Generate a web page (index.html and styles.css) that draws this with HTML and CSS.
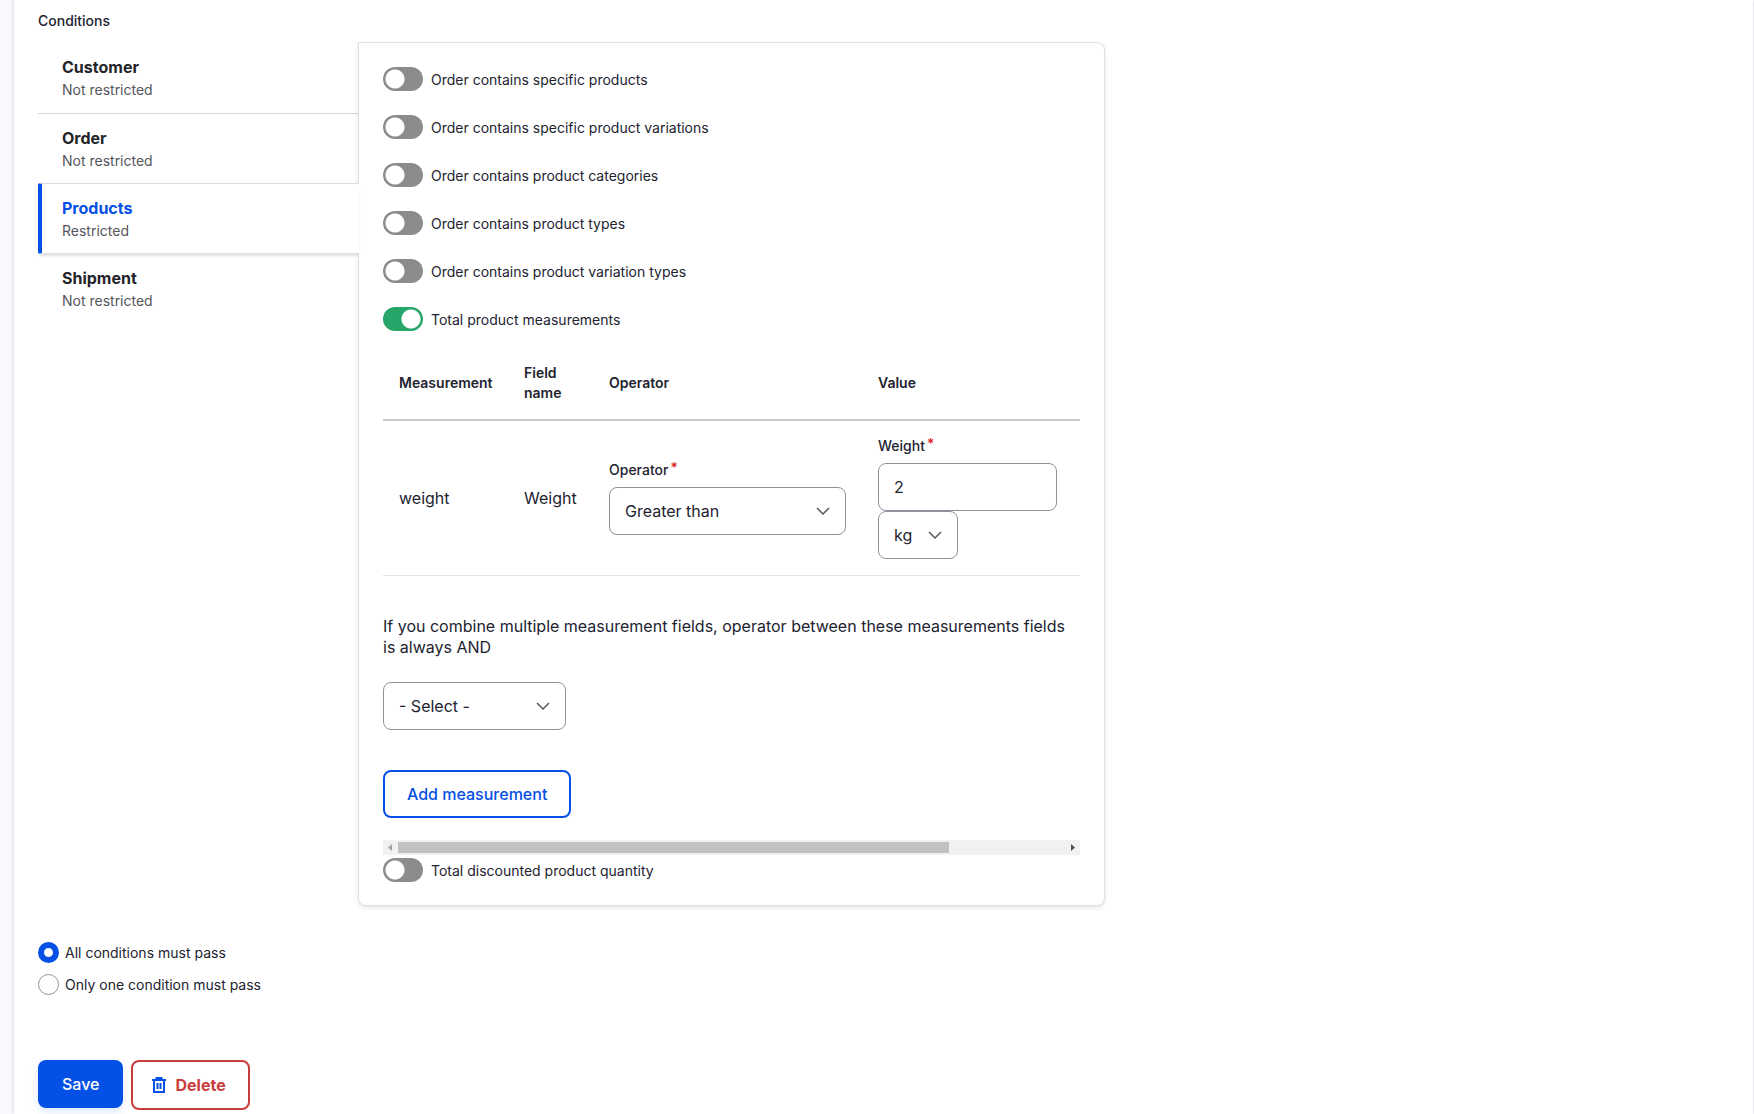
FILE: index.html
```html
<!DOCTYPE html>
<html lang="en">
<head>
<meta charset="utf-8">
<meta name="viewport" content="width=device-width, initial-scale=1">
<title>Edit promotion</title>
<link rel="stylesheet" href="styles.css">
</head>
<body>
<form class="page">
  <h4 class="section-title">Conditions</h4>

  <div class="vertical-tabs">
    <ul class="tabs">
      <li class="tab"><a class="tab-link" href="#customer"><strong class="tab-title">Customer</strong><span class="tab-summary">Not restricted</span></a></li>
      <li class="tab"><a class="tab-link" href="#order"><strong class="tab-title">Order</strong><span class="tab-summary">Not restricted</span></a></li>
      <li class="tab tab-active"><a class="tab-link" href="#products"><strong class="tab-title">Products</strong><span class="tab-summary">Restricted</span></a></li>
      <li class="tab"><a class="tab-link" href="#shipment"><strong class="tab-title">Shipment</strong><span class="tab-summary">Not restricted</span></a></li>
    </ul>

    <section class="panel" id="products">
      <div class="switches">
        <label class="switch-row"><input class="switch" type="checkbox"><span class="option-text">Order contains specific products</span></label>
        <label class="switch-row"><input class="switch" type="checkbox"><span class="option-text">Order contains specific product variations</span></label>
        <label class="switch-row"><input class="switch" type="checkbox"><span class="option-text">Order contains product categories</span></label>
        <label class="switch-row"><input class="switch" type="checkbox"><span class="option-text">Order contains product types</span></label>
        <label class="switch-row"><input class="switch" type="checkbox"><span class="option-text">Order contains product variation types</span></label>
        <label class="switch-row"><input class="switch" type="checkbox" checked><span class="option-text">Total product measurements</span></label>
      </div>

      <div class="measurements">
        <table class="measure-table">
          <thead>
            <tr>
              <th class="col-measurement" scope="col">Measurement</th>
              <th class="col-field" scope="col">Field name</th>
              <th class="col-operator" scope="col">Operator</th>
              <th scope="col">Value</th>
            </tr>
          </thead>
          <tbody>
            <tr>
              <td>weight</td>
              <td>Weight</td>
              <td>
                <label class="field-label required" for="operator">Operator</label>
                <span class="select-wrap select-fill">
                  <select class="control select" id="operator"><option>Greater than</option></select>
                  <svg class="chevron" viewBox="0 0 14 9" aria-hidden="true"><path d="M1 1l6 6 6-6"/></svg>
                </span>
              </td>
              <td>
                <label class="field-label required" for="weight">Weight</label>
                <input class="control number" id="weight" type="text" value="2">
                <span class="select-wrap select-unit">
                  <select class="control select" aria-label="Unit"><option>kg</option></select>
                  <svg class="chevron" viewBox="0 0 14 9" aria-hidden="true"><path d="M1 1l6 6 6-6"/></svg>
                </span>
              </td>
            </tr>
          </tbody>
        </table>
        <p class="hint">If you combine multiple measurement fields, operator between these measurements fields is always AND</p>
        <span class="select-wrap select-add">
          <select class="control select" aria-label="Measurement field"><option>- Select -</option></select>
          <svg class="chevron" viewBox="0 0 14 9" aria-hidden="true"><path d="M1 1l6 6 6-6"/></svg>
        </span>
        <div class="add-row"><button class="button button-outline" type="button">Add measurement</button></div>
      </div>
      <div class="scrollbar" aria-hidden="true">
        <svg class="scroll-arrow" viewBox="0 0 15 15"><path fill="#a3a3a3" d="M9 4v7L5 7.500z"/></svg>
        <div class="scroll-track"><div class="scroll-thumb"></div></div>
        <svg class="scroll-arrow" viewBox="0 0 15 15"><path fill="#505050" d="M6 4v7l4-3.500z"/></svg>
      </div>

      <label class="switch-row switch-last"><input class="switch" type="checkbox"><span class="option-text">Total discounted product quantity</span></label>
    </section>
  </div>

  <div class="radios">
    <label class="radio-row"><input class="radio" type="radio" name="pass" checked><span class="option-text">All conditions must pass</span></label>
    <label class="radio-row"><input class="radio" type="radio" name="pass"><span class="option-text">Only one condition must pass</span></label>
  </div>

  <div class="actions">
    <button class="button button-primary" type="submit">Save</button>
    <a class="button button-danger" href="#delete">
      <svg class="trash" viewBox="0 0 14 16" aria-hidden="true"><path d="M0 3h14M4.500 3V1h5v2M2 3v12h10V3M5.500 6v6M8.500 6v6"/></svg>
      <span>Delete</span>
    </a>
  </div>
</form>
</body>
</html>
```

FILE: styles.css
```css
* {
  box-sizing: border-box;
}

body {
  margin: 0;
  padding: 0 1px 0 14px;
  background: #f8faff;
  color: #222330;
  font: 16px/21px Inter, "Liberation Sans", sans-serif;
}

.page {
  min-height: 100vh;
  padding: 12px 24px 4px;
  background: #fff;
  box-shadow: 0 0 4px rgba(0, 0, 0, 0.2);
}

.section-title {
  margin: 0 0 12px;
  font-size: 14px;
  line-height: 18px;
  font-weight: 500;
}

/* Vertical tabs */
.vertical-tabs {
  display: grid;
  grid-template-columns: 320px minmax(0, 747px);
  align-items: start;
}

.tabs {
  position: relative;
  z-index: 1;
  margin: 0;
  padding: 0;
  list-style: none;
}

.tab-link {
  display: flex;
  flex-direction: column;
  gap: 1px;
  height: 70px;
  padding: 13px 20px 0 24px;
  color: #232429;
  text-decoration: none;
}

.tab:first-child .tab-link {
  height: 72px;
  padding-top: 14px;
  border-bottom: 1px solid #d3d4d9;
}

.tab-title {
  line-height: 22px;
}

.tab-summary {
  font-size: 14px;
  line-height: 22px;
  color: #55565b;
}

.tab-active {
  margin: -1px -1px 0 0;
  border: 1px solid #dcdde2;
  border-width: 1px 0;
  border-left: 4px solid #0550e6;
  border-radius: 2px 0 0 2px;
  background: #fff;
  box-shadow: 0 3px 3px -1px rgba(0, 0, 0, 0.12);
}

.tab-active .tab-link {
  height: 69px;
  padding-left: 20px;
}

.tab-active .tab-title {
  color: #0550e6;
}

.panel {
  padding: 24px 24px 23px;
  border: 1px solid #dedfe8;
  border-radius: 0 8px 8px 8px;
  background: #fff;
  box-shadow: 0 2px 4px rgba(0, 0, 0, 0.1);
}

/* Switches */
.switches {
  display: flex;
  flex-direction: column;
  gap: 24px;
}

.switch-row {
  display: flex;
  align-items: center;
  gap: 8px;
}

.option-text {
  padding-top: 2px;
  font-size: 14px;
  line-height: 22px;
}

.switch {
  flex: none;
  width: 40px;
  height: 24px;
  margin: 0;
  border-radius: 12px;
  appearance: none;
  background: radial-gradient(circle at 12px 12px, #fff 9px, #8c8c8c 10px);
}

.switch:checked {
  background: radial-gradient(circle at 28px 12px, #fff 9px, #26a769 10px);
}

.switch-last {
  margin-top: 3px;
}

/* Measurements */
.measurements {
  margin-top: 16px;
  overflow-x: auto;
  scrollbar-width: none;
}

.scrollbar {
  display: flex;
  height: 15px;
  background: #f1f1f1;
}

.scroll-arrow {
  flex: none;
  width: 15px;
  height: 15px;
}

.scroll-track {
  flex: 1;
  padding: 2px 0;
}

.scroll-thumb {
  width: 82.6%;
  height: 11px;
  background: #c1c1c1;
}

.measure-table {
  width: 100%;
  border-collapse: collapse;
  table-layout: fixed;
}

.col-measurement {
  width: 125px;
}

.col-field {
  width: 85px;
}

.col-operator {
  width: 269px;
}

.measure-table th {
  height: 73px;
  padding: 0 16px;
  border-bottom: 2px solid #c9c9cb;
  font-size: 14px;
  line-height: 20px;
  font-weight: 600;
  text-align: left;
}

.measure-table td {
  padding: 16px;
  border-bottom: 1px solid #e2e2e5;
  vertical-align: middle;
}

.field-label {
  display: block;
  margin-bottom: 8px;
  font-size: 14px;
  line-height: 18px;
  font-weight: 500;
}

.required::after {
  content: "*";
  margin-left: 2px;
  color: #d72222;
  vertical-align: 2px;
  line-height: 1px;
}

.control {
  display: block;
  width: 100%;
  height: 48px;
  margin: 0;
  padding: 0 15px;
  border: 1px solid #8e929c;
  border-radius: 8px;
  background: #fff;
  color: inherit;
  font: inherit;
}

.number {
  width: 179px;
}

.select {
  appearance: none;
}

.select-wrap {
  display: grid;
  align-items: center;
}

.select-wrap > * {
  grid-area: 1 / 1;
}

.select-unit {
  width: 80px;
}

.select-add {
  width: 183px;
}

.chevron {
  justify-self: end;
  width: 14px;
  height: 9px;
  margin-right: 16px;
  fill: none;
  stroke: #55565b;
  stroke-width: 1.500;
  pointer-events: none;
}

.hint {
  margin: 40px 0 24px;
}

/* Buttons */
.add-row {
  width: 844px;
  padding: 40px 0 22px;
}

.button {
  display: inline-flex;
  align-items: center;
  height: 48px;
  padding: 0 24px;
  border: 0 solid;
  border-radius: 8px;
  font: 500 16px/24px Inter, "Liberation Sans", sans-serif;
  text-decoration: none;
}

.button-outline {
  display: flex;
  padding: 0 22px;
  border-width: 2px;
  background: #fff;
  color: #0550e6;
}

.button-primary {
  background: #0550e6;
  color: #fff;
  box-shadow: 0 4px 8px rgba(5, 80, 230, 0.12);
}

.button-danger {
  gap: 9px;
  height: 50px;
  padding: 0 22px 0 19px;
  border-width: 2px;
  color: #ca3c3c;
  font-weight: 700;
}

.trash {
  width: 14px;
  height: 16px;
  fill: none;
  stroke: #0550e6;
  stroke-width: 2;
}

/* Radios */
.radios {
  display: flex;
  flex-direction: column;
  gap: 8px;
  margin-top: 34px;
}

.radio-row {
  display: flex;
  align-items: center;
  gap: 6px;
}

.radio {
  width: 21px;
  height: 21px;
  margin: 0;
  border: 1px solid #8e929c;
  border-radius: 50%;
  appearance: none;
}

.radio:checked {
  border: 6px solid #0550e6;
}

.actions {
  display: flex;
  align-items: flex-start;
  gap: 8px;
  margin-top: 64px;
}
```
